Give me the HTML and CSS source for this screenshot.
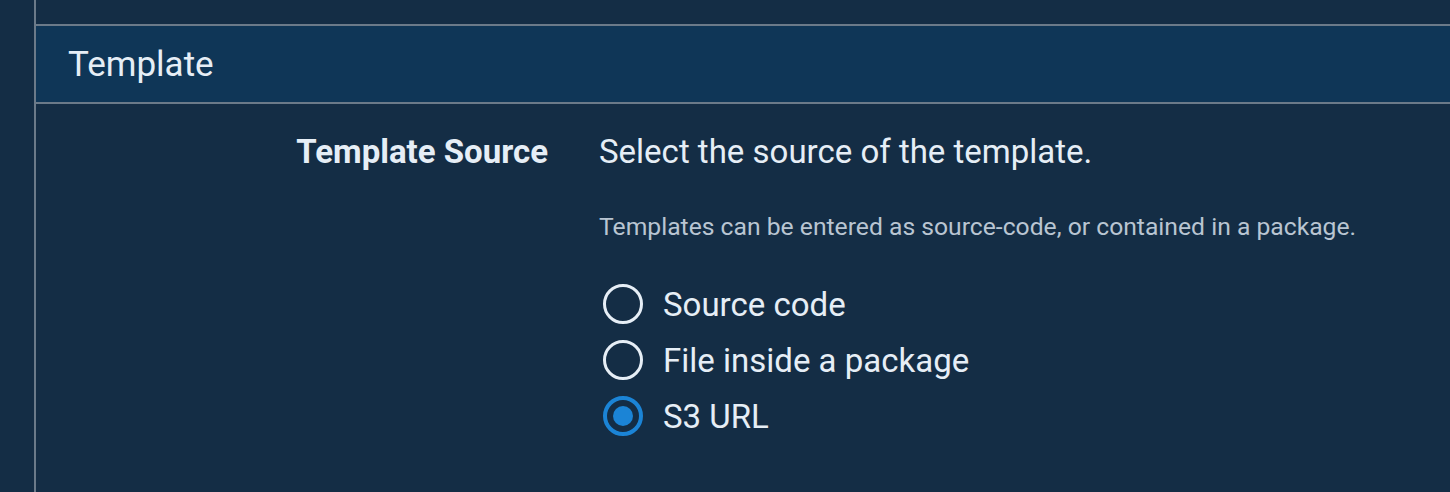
FILE: index.html
```html
<!DOCTYPE html>
<html lang="en">
<head>
<meta charset="UTF-8">
<meta name="viewport" content="width=device-width, initial-scale=1.0">
<title>Template</title>
<link rel="stylesheet" href="styles.css">
</head>
<body>
  <div class="page">
    <div class="top"></div>
    <div class="section-head">Template</div>
    <div class="field">
      <div class="field-label">Template Source</div>
      <div class="field-body">
        <div class="field-title">Select the source of the template.</div>
        <div class="field-help">Templates can be entered as source-code, or contained in a package.</div>
        <div class="options">
          <label class="option"><span class="radio"></span>Source code</label>
          <label class="option"><span class="radio"></span>File inside a package</label>
          <label class="option"><span class="radio checked"></span>S3 URL</label>
        </div>
      </div>
    </div>
  </div>
</body>
</html>
```

FILE: styles.css
```css
body {
  margin: 0;
  background: #142d45;
  font-family: Roboto, "Liberation Sans", sans-serif;
  color: #e6eef6;
  overflow: hidden;
}

.page {
  margin-left: 34px;
  border-left: 2px solid #6b7a89;
  height: 100vh;
}

.top {
  height: 24px;
}

.section-head {
  border-top: 2px solid #6b7a89;
  border-bottom: 2px solid #6b7a89;
  background: #0f3657;
  height: 75px;
  line-height: 75px;
  padding-top: 1px;
  padding-left: 32px;
  font-size: 35px;
}

.field {
  display: grid;
  grid-template-columns: 512px 1fr;
  column-gap: 51px;
  padding-top: 28px;
}

.field-label {
  text-align: right;
  font-weight: bold;
  font-size: 33px;
  line-height: 40px;
}

.field-title {
  font-size: 33px;
  line-height: 40px;
}

.field-help {
  margin-top: 40px;
  font-size: 24.7px;
  line-height: 30px;
  color: #b9c5d2;
}

.options {
  margin-top: 34px;
  padding-left: 4px;
}

.option {
  display: flex;
  align-items: center;
  gap: 20px;
  height: 56px;
  font-size: 33px;
}

.radio {
  width: 40px;
  height: 40px;
  box-sizing: border-box;
  border: 3.5px solid #e6eef6;
  border-radius: 50%;
  display: flex;
  align-items: center;
  justify-content: center;
}

.radio.checked {
  border: 4px solid #1b84d6;
}

.radio.checked::after {
  content: "";
  width: 20px;
  height: 20px;
  border-radius: 50%;
  background: #1b84d6;
}
```
